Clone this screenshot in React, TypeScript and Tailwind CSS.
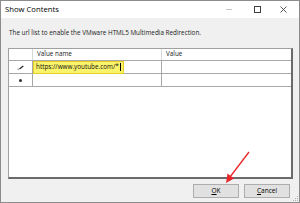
import React from "react";

const font = { fontFamily: '"Open Sans", "Noto Sans", "Liberation Sans", sans-serif' };

export default function App() {
  return (
    <div className="relative w-[300px] h-[203px] overflow-hidden bg-white" style={font}>
      <div className="flex flex-col w-[300px] h-[203px] border border-[#8c8c8c]">
        {/* Title bar */}
        <div className="flex items-center h-[17px] bg-white shrink-0">
          <span className="pl-[4px] text-[7.7px] text-black leading-none">Show Contents</span>
          <div className="ml-auto flex items-center h-full">
            <div className="w-[28px] flex justify-center">
              <div className="w-[6px] h-px bg-[#c8c8c8]" />
            </div>
            <div className="w-[28px] flex justify-center">
              <div className="w-[7px] h-[7px] border border-[#404040]" />
            </div>
            <div className="w-[28px] flex justify-center pr-[3px]">
              <svg width="7" height="7" viewBox="0 0 7 7">
                <path d="M0.5 0.5 L6.5 6.5 M6.5 0.5 L0.5 6.5" stroke="#404040" strokeWidth="0.9" />
              </svg>
            </div>
          </div>
        </div>
        {/* Body */}
        <div className="flex flex-col flex-1 bg-[#f0f0f0] pl-[7px] pr-[6px]">
          <div className="pt-[12px] h-[30px] text-[6.35px] leading-none text-[#1a1a1a] pl-[1px]">
            The url list to enable the VMware HTML5 Multimedia Redirection.
          </div>
          <div className="flex flex-col h-[131px] bg-white border-l border-t border-[#a0a0a0] border-r-2 border-b-2 border-r-[#6a6a6a] border-b-[#6a6a6a]">
            {/* header */}
            <div className="flex h-[12px] border-b border-[#a8a8a8] text-[6.35px] leading-none text-[#202020]">
              <div className="w-[24px] border-r border-[#d8d8d8]" />
              <div className="w-[129px] border-r border-[#d8d8d8] flex items-center pl-[4px]">Value name</div>
              <div className="flex-1 flex items-center pl-[4px]">Value</div>
            </div>
            {/* row 1 */}
            <div className="flex h-[13px] border-b border-[#a8a8a8]">
              <div className="w-[24px] border-r border-[#a8a8a8] flex items-center justify-center">
                <svg width="7" height="5" viewBox="0 0 7 5">
                  <path d="M0.5 4.2 L2 4.2" stroke="#606060" strokeWidth="0.8" fill="none" />
                  <path d="M2.5 4 L6.3 1" stroke="#202020" strokeWidth="1.1" fill="none" />
                </svg>
              </div>
              <div className="w-[129px] border-r border-[#a8a8a8] flex items-center">
                <div className="flex items-center h-[13px] w-[91px] bg-[#fbf36a] border border-[#e6cf2a] pl-[2px] text-[6.35px] leading-none text-[#101010]">
                  https://www.youtube.com/*
                  <span className="ml-[1px] w-px h-[8px] bg-black" />
                </div>
              </div>
              <div className="flex-1" />
            </div>
            {/* row 2 */}
            <div className="flex h-[13px] border-b border-[#a8a8a8]">
              <div className="w-[24px] border-r border-[#a8a8a8] flex items-center justify-center">
                <div className="w-[3px] h-[3px] rounded-full bg-[#303030]" />
              </div>
              <div className="w-[129px] border-r border-[#a8a8a8]" />
              <div className="flex-1" />
            </div>
          </div>
          {/* buttons */}
          <div className="flex justify-end gap-[5px] pt-[5px] pr-[3px]">
            <div className="w-[46px] h-[14px] bg-[#e1e1e1] border border-[#adadad] flex items-center justify-center text-[6.5px] leading-none text-black">
              <span><span className="underline">O</span>K</span>
            </div>
            <div className="w-[46px] h-[14px] bg-[#e1e1e1] border border-[#adadad] flex items-center justify-center text-[6.5px] leading-none text-black">
              <span><span className="underline">C</span>ancel</span>
            </div>
          </div>
        </div>
      </div>
      {/* resize grip */}
      <svg className="absolute right-[1px] bottom-[1px]" width="6" height="6" viewBox="0 0 6 6">
        <rect x="4" y="0" width="1" height="1" fill="#b0b0b0" />
        <rect x="2" y="2" width="1" height="1" fill="#b0b0b0" />
        <rect x="4" y="2" width="1" height="1" fill="#b0b0b0" />
        <rect x="0" y="4" width="1" height="1" fill="#b0b0b0" />
        <rect x="2" y="4" width="1" height="1" fill="#b0b0b0" />
        <rect x="4" y="4" width="1" height="1" fill="#b0b0b0" />
      </svg>
      {/* red arrow */}
      <svg className="absolute left-0 top-0 pointer-events-none" width="300" height="203" viewBox="0 0 300 203">
        <line x1="249" y1="152" x2="230" y2="177" stroke="#e8262a" strokeWidth="1.3" />
        <polygon points="226,183 227.5,173.5 234,178.5" fill="#e8262a" />
      </svg>
    </div>
  );
}
